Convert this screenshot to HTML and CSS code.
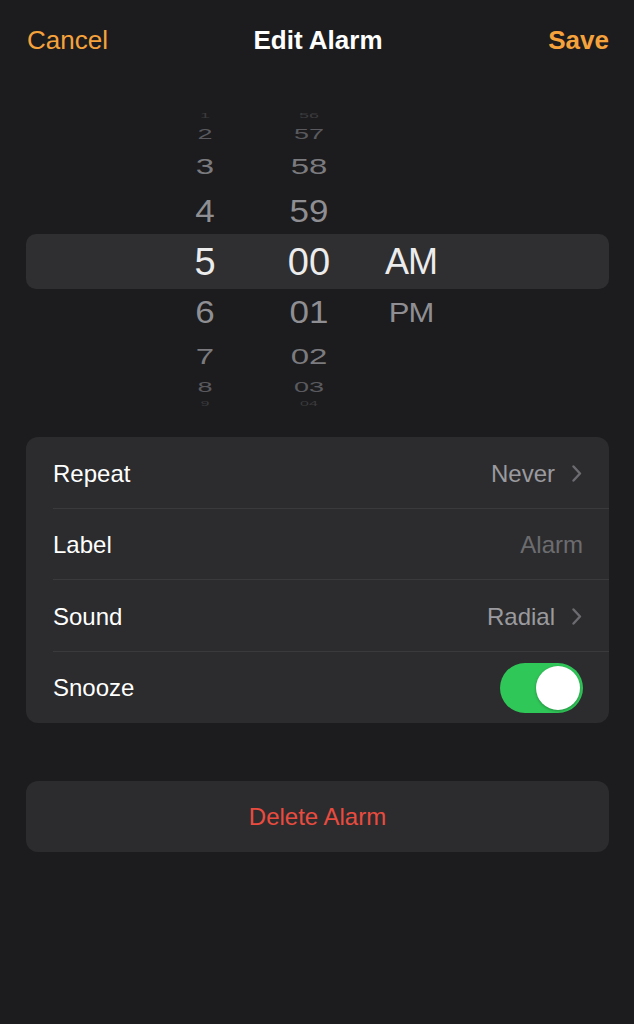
FILE: index.html
```html
<!DOCTYPE html>
<html lang="en">
<head>
    <meta charset="UTF-8">
    <meta name="viewport" content="width=device-width, initial-scale=1.0">
    <title>Edit Alarm</title>
    <link rel="stylesheet" href="styles.css">
</head>
<body>

    <!-- Верхняя панель -->
    <header class="navbar">
        <span class="nav-btn">Cancel</span>
        <span class="nav-title">Edit Alarm</span>
        <span class="nav-btn nav-save">Save</span>
    </header>

    <!-- Колесо выбора времени -->
    <div class="picker">
        <div class="band"></div>

        <div class="cell c-h r1">1</div>
        <div class="cell c-h r2">2</div>
        <div class="cell c-h r3">3</div>
        <div class="cell c-h r4">4</div>
        <div class="cell c-h r5">5</div>
        <div class="cell c-h r6">6</div>
        <div class="cell c-h r7">7</div>
        <div class="cell c-h r8">8</div>
        <div class="cell c-h r9">9</div>

        <div class="cell c-m r1">56</div>
        <div class="cell c-m r2">57</div>
        <div class="cell c-m r3">58</div>
        <div class="cell c-m r4">59</div>
        <div class="cell c-m r5">00</div>
        <div class="cell c-m r6">01</div>
        <div class="cell c-m r7">02</div>
        <div class="cell c-m r8">03</div>
        <div class="cell c-m r9">04</div>

        <div class="cell c-p r5 ampm">AM</div>
        <div class="cell c-p r6 ampm">PM</div>
    </div>

    <!-- Настройки будильника -->
    <div class="card">
        <div class="row">
            <span class="row-label">Repeat</span>
            <span class="row-value">Never <span class="chevron"><svg width="10" height="17" viewBox="0 0 10 17"><path d="M1.5 1.5 L8 8.5 L1.5 15.5" fill="none" stroke="#6b6b70" stroke-width="2.4" stroke-linecap="round" stroke-linejoin="round"/></svg></span></span>
        </div>
        <div class="row">
            <span class="row-label">Label</span>
            <span class="row-value placeholder">Alarm</span>
        </div>
        <div class="row">
            <span class="row-label">Sound</span>
            <span class="row-value">Radial <span class="chevron"><svg width="10" height="17" viewBox="0 0 10 17"><path d="M1.5 1.5 L8 8.5 L1.5 15.5" fill="none" stroke="#6b6b70" stroke-width="2.4" stroke-linecap="round" stroke-linejoin="round"/></svg></span></span>
        </div>
        <div class="row">
            <span class="row-label">Snooze</span>
            <span class="toggle on"><span class="knob"></span></span>
        </div>
    </div>

    <div class="card delete-card">
        <span class="delete-text">Delete Alarm</span>
    </div>

</body>
</html>
```

FILE: styles.css
```css
body {
    font-family: "Liberation Sans", Arial, sans-serif;
    background-color: #1c1c1e; /* Темный фон */
    color: #ffffff;
    margin: 0;
    padding: 0 25px 0 26px;
    width: 634px;
    height: 1024px;
    box-sizing: border-box;
    overflow: hidden;
}

.navbar {
    height: 80px;
    display: grid;
    grid-template-columns: 1fr auto 1fr;
    align-items: center;
    font-size: 26px;
    padding: 0 0 0 1px;
}

.nav-btn {
    color: #f6a23c;
}

.nav-save {
    font-weight: bold;
    justify-self: end;
}

.nav-title {
    font-weight: bold;
    color: #ffffff;
}

/* Колесо */
.picker {
    margin-top: 28px;
    display: grid;
    grid-template-columns: 127px 104px 104px 100px 1fr;
    grid-template-rows: 16px 20px 44px 46px 55px 46px 42px 20px 13px;
    height: 302px;
}

.band {
    grid-row: 5;
    grid-column: 1 / -1;
    background-color: #2f2f31;
    border-radius: 10px;
}

.cell {
    display: flex;
    align-items: center;
    justify-content: center;
    line-height: 1;
}

.c-h { grid-column: 2; }
.c-m { grid-column: 3; }
.c-p { grid-column: 4; }

.r1 { grid-row: 1; font-size: 18px; transform: scaleY(0.35); color: #3a3a3c; }
.r2 { grid-row: 2; font-size: 27px; transform: scaleY(0.55); color: #5a5a5e; }
.r3 { grid-row: 3; font-size: 33px; transform: scaleY(0.68); color: #7b7b7f; }
.r4 { grid-row: 4; font-size: 35px; transform: scaleY(0.88); color: #8f8f93; }
.r5 { grid-row: 5; font-size: 38px; color: #ececec; }
.r6 { grid-row: 6; font-size: 35px; transform: scaleY(0.88); color: #8f8f93; }
.r7 { grid-row: 7; font-size: 33px; transform: scaleY(0.68); color: #7b7b7f; }
.r8 { grid-row: 8; font-size: 27px; transform: scaleY(0.55); color: #5a5a5e; }
.r9 { grid-row: 9; font-size: 16px; transform: scaleY(0.4); color: #3a3a3c; }

.ampm {
    letter-spacing: -1px;
}

.r5.ampm {
    font-size: 36px;
}

.r6.ampm {
    font-size: 31px;
    transform: scaleY(0.92);
}

/* Карточки */
.card {
    background-color: #2c2c2e;
    border-radius: 12px;
    margin-top: 27px;
}

.row {
    height: 71.5px;
    box-sizing: border-box;
    margin-left: 27px;
    padding: 3px 26px 0 0;
    display: flex;
    justify-content: space-between;
    align-items: center;
    font-size: 24px;
    border-bottom: 1px solid #3a3a3c;
}

.row:last-child {
    border-bottom: none;
    padding-top: 1px;
}

.row-value {
    color: #9a9a9f;
    display: flex;
    align-items: center;
}

.placeholder {
    color: #6c6c70;
}

.chevron {
    display: flex;
    margin-left: 17px;
    margin-right: 1px;
}

.toggle {
    width: 83px;
    height: 50px;
    border-radius: 25px;
    background-color: #30c759;
    box-sizing: border-box;
    padding: 3px;
    display: flex;
    justify-content: flex-end;
}

.knob {
    width: 44px;
    height: 44px;
    border-radius: 50%;
    background-color: #ffffff;
    box-shadow: 0 1px 3px rgba(0, 0, 0, 0.3);
}

.delete-card {
    margin-top: 58px;
    height: 71px;
    display: flex;
    align-items: center;
    justify-content: center;
}

.delete-text {
    color: #ea4b3f;
    font-size: 24px;
}
```
